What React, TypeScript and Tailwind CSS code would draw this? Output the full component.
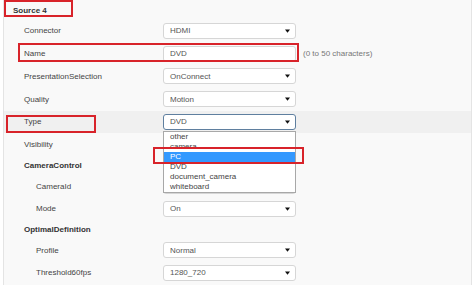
import { ReactNode } from "react";

const Caret = () => (
  <svg width="5" height="4" viewBox="0 0 5 4" className="shrink-0">
    <path d="M0 0.5h5L2.5 3.8z" fill="#111" />
  </svg>
);

function Select({ value, focused }: { value?: string; focused?: boolean }) {
  return (
    <div
      className={`flex h-[16px] w-[133px] items-center justify-between rounded-[3px] border bg-white pl-[6px] pr-[5px] text-[#555] ${
        focused ? "border-[#5f7f9f]" : "border-[#d6d6d6]"
      }`}
    >
      <span>{value}</span>
      <Caret />
    </div>
  );
}

function Row({ label, indent, children, className = "" }: { label: string; indent?: boolean; children?: ReactNode; className?: string }) {
  return (
    <div className={`flex h-[22.75px] items-center ${className}`}>
      <div className={`w-[159px] shrink-0 ${indent ? "pl-[32px]" : "pl-[20px]"}`}>{label}</div>
      {children}
    </div>
  );
}

function Heading({ label }: { label: string }) {
  return (
    <div className="flex h-[18.6px] items-center pl-[20px] font-bold text-[#333]">{label}</div>
  );
}

const typeOptions = ["other", "camera", "PC", "DVD", "document_camera", "whiteboard"];

export default function App() {
  return (
    <div className="h-[285px] w-[474px] overflow-hidden bg-white font-['Liberation_Sans',Arial,sans-serif] text-[8px] leading-[9px] text-[#444]">
      <div className="relative ml-[3px] h-full w-[469px] border-x border-[#e4e4e4] bg-[#f9f9f9]">
        {/* Header */}
        <div className="flex h-[19.6px] items-center pl-[9px] pt-[1px] font-bold text-[#333]">Source 4</div>

        <Row label="Connector">
          <Select value="HDMI" />
        </Row>
        <Row label="Name">
          <div className="flex h-[16px] w-[133px] items-center rounded-[3px] border border-[#d6d6d6] bg-white pl-[6px] text-[#555]">
            DVD
          </div>
          <span className="ml-[7px] text-[#777]">(0 to 50 characters)</span>
        </Row>
        <Row label="PresentationSelection">
          <Select value="OnConnect" />
        </Row>
        <Row label="Quality">
          <Select value="Motion" />
        </Row>
        <Row label="Type" className="bg-[#f0f0f0]">
          <Select value="DVD" focused />
        </Row>
        <Row label="Visibility">
          <Select />
        </Row>
        <Heading label="CameraControl" />
        <Row label="CameraId" indent>
          <Select />
        </Row>
        <Row label="Mode" indent>
          <Select value="On" />
        </Row>
        <Heading label="OptimalDefinition" />
        <Row label="Profile" indent>
          <Select value="Normal" />
        </Row>
        <Row label="Threshold60fps" indent>
          <Select value="1280_720" />
        </Row>

        {/* Open dropdown for Type */}
        <div className="absolute left-[159px] top-[131px] w-[133px] border border-[#a8a8a8] bg-white text-[#444]">
          {typeOptions.map((o) => (
            <div
              key={o}
              className={`h-[10px] pl-[6px] leading-[10px] ${o === "PC" ? "bg-[#3399ff] text-white" : ""}`}
            >
              {o}
            </div>
          ))}
        </div>

        {/* Annotation boxes */}
        <div className="absolute left-[0px] top-[0px] h-[17px] w-[69px] border-2 border-[#d8232a]" />
        <div className="absolute left-[14px] top-[43px] h-[19px] w-[281px] border-2 border-[#d8232a]" />
        <div className="absolute left-[2px] top-[115px] h-[18px] w-[90px] border-2 border-[#d8232a]" />
        <div className="absolute left-[149px] top-[147px] h-[17px] w-[151px] border-2 border-[#d8232a]" />
      </div>
    </div>
  );
}
